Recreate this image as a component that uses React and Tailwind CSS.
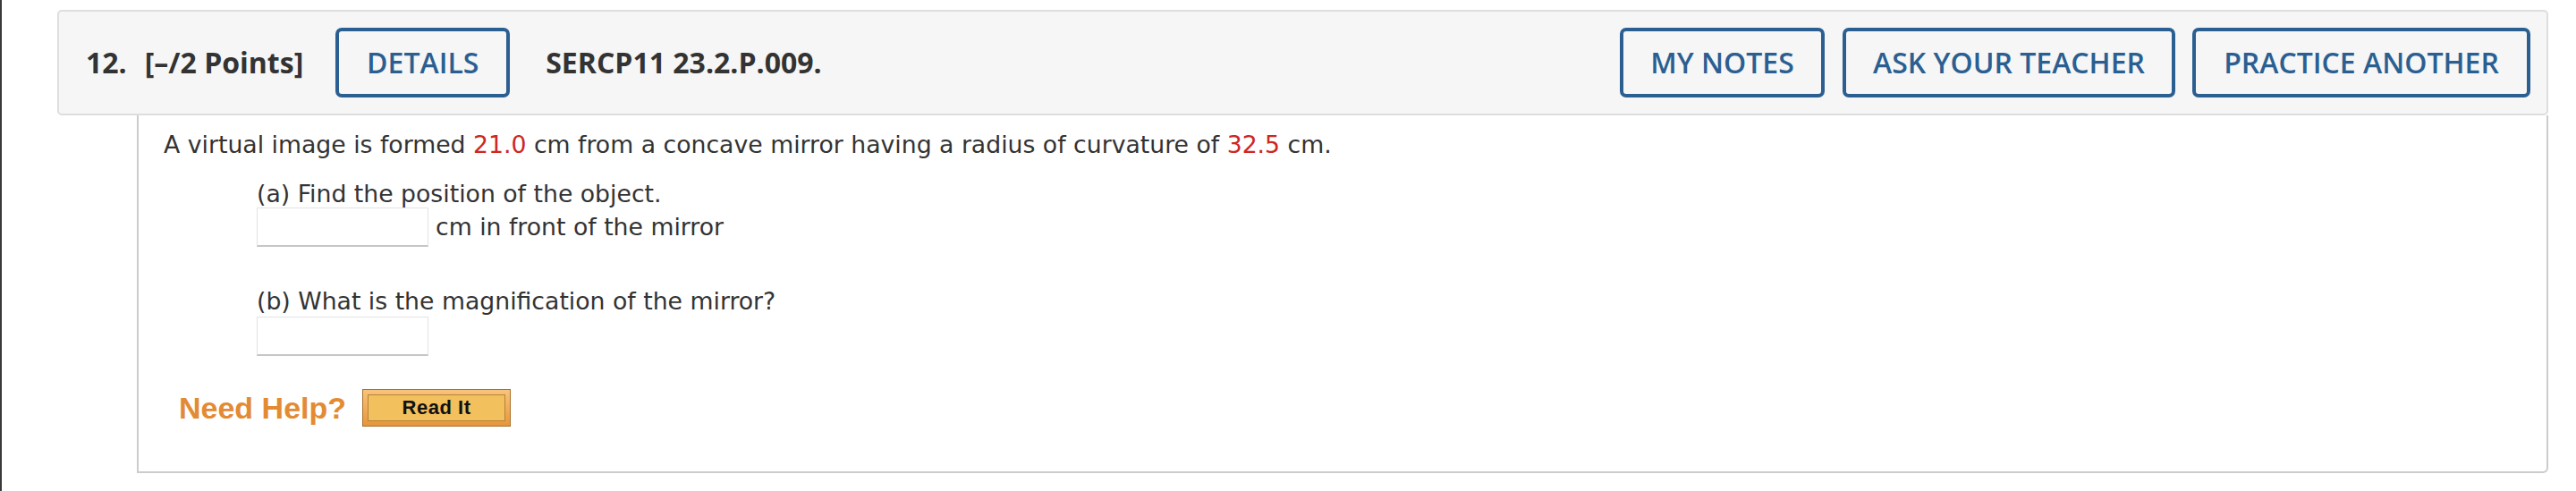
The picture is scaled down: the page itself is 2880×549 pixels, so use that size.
export default function App() {
  const btn =
    "h-[78px] flex items-center justify-center rounded-[7px] border-[4px] border-[#2b5f91] text-[#2b5f91] text-[32px] font-semibold leading-none";
  return (
    <div className="min-h-[549px] bg-white border-l-2 border-[#3a3a3a] pt-[11px] pr-[31px] pl-[62px]">
      <div
        className="h-[118px] bg-[#f6f6f6] border-2 border-[#dedede] rounded-[5px] flex items-center pl-[30px] pr-[18px] text-[#333333]"
        style={{ fontFamily: '"Open Sans", sans-serif' }}
      >
        <span className="text-[32px] font-bold leading-none">12.</span>
        <span className="text-[32px] font-bold leading-none ml-[20px]">[–/2 Points]</span>
        <div className={btn + " w-[195px] ml-[36px]"}>DETAILS</div>
        <span className="text-[32px] font-bold leading-none ml-[40px]">SERCP11 23.2.P.009.</span>
        <div className="flex-1" />
        <div className={btn + " w-[229px]"}>MY NOTES</div>
        <div className={btn + " w-[372px] ml-[20px]"}>ASK YOUR TEACHER</div>
        <div className={btn + " w-[378px] ml-[19px]"}>PRACTICE ANOTHER</div>
      </div>
      <div
        className="ml-[89px] border-l-2 border-r-2 border-b-2 border-[#cccccc] rounded-br-[6px] pl-[28px] pt-[18px] pb-[50px] text-[#333333] text-[26.7px]"
        style={{ fontFamily: '"DejaVu Sans", Verdana, sans-serif' }}
      >
        <div className="leading-[30px] whitespace-nowrap">
          A virtual image is formed <span className="text-[#d0261f]">21.0</span> cm from a concave mirror having a radius of curvature of{" "}
          <span className="text-[#d0261f]">32.5</span> cm.
        </div>
        <div className="pl-[104px] mt-[25px]">
          <div className="leading-[30px]">(a) Find the position of the object.</div>
          <div className="flex items-center">
            <div className="w-[192px] h-[44px] bg-white border border-[#e3e3e3] border-b-2 border-b-[#c6c6c6]" />
            <span className="ml-[8px] leading-[30px]">cm in front of the mirror</span>
          </div>
          <div className="leading-[30px] mt-[46px]">(b) What is the magnification of the mirror?</div>
          <div className="mt-[2px] w-[192px] h-[44px] bg-white border border-[#e3e3e3] border-b-2 border-b-[#c6c6c6]" />
        </div>
        <div className="flex items-center mt-[37px] ml-[17px]">
          <span
            className="text-[34px] font-bold leading-none text-[#e38b34]"
            style={{ fontFamily: '"Liberation Sans", Arial, sans-serif' }}
          >
            Need Help?
          </span>
          <div className="ml-[18px] w-[166px] h-[42px] border border-[#a8712c] bg-gradient-to-b from-[#f9c37a] to-[#e8953a] p-[5px]">
            <div
              className="w-full h-full border border-[#b5823a] bg-[#f2c05c] flex items-center justify-center text-[22px] font-bold text-[#111111] leading-none tracking-[0.5px]"
              style={{ fontFamily: '"Liberation Sans", Arial, sans-serif' }}
            >
              Read It
            </div>
          </div>
        </div>
      </div>
    </div>
  );
}
